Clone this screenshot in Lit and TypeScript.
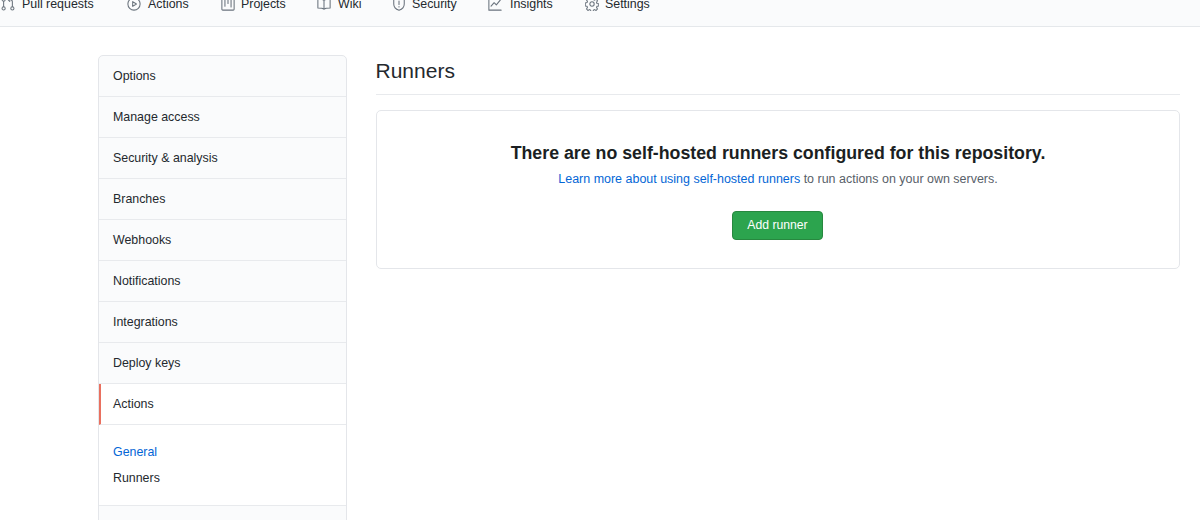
import { LitElement, html, css, svg } from "lit";
import { customElement } from "lit/decorators.js";

const icon = (w: number, body: unknown) => html`<svg class="ico" width="${w}" height="${w}" viewBox="0 0 16 16" fill="none" stroke="#6a737d" stroke-width="1.2" stroke-linecap="round" stroke-linejoin="round">${body}</svg>`;

// label, icon, gap between icon and label, width of the tab
const tabs: [string, unknown, number, number][] = [
  ["Pull requests", svg`<circle cx="3" cy="3" r="1.8"/><circle cx="3" cy="13" r="1.8"/><circle cx="13" cy="13" r="1.8"/><path d="M3 5v6M13 11V5.5C13 4 12 3 10.5 3H8.5M10 1L8 3l2 2"/>`, 7, 126],
  ["Actions", svg`<circle cx="8" cy="8" r="7"/><path d="M6.5 5.3v5.4L10.8 8z"/>`, 7, 94],
  ["Projects", svg`<rect x="1" y="1" width="14" height="14" rx="1"/><path d="M4.5 3.5v7M8 3.5v4M11.5 3.5v8"/>`, 6, 96],
  ["Wiki", svg`<path d="M8 4v10M8 4C7 2.8 5.5 2.5 1 2.5v10c4.5 0 6 .4 7 1.5 1-1.1 2.5-1.5 7-1.5v-10c-4.5 0-6 .3-7 1.5z"/>`, 7, 75],
  ["Security", svg`<path d="M8 .8L2 3v5c0 3.5 2.4 6 6 7.2 3.6-1.2 6-3.7 6-7.200V3z"/><path d="M8 4.500v4M8 11v.5"/>`, 6, 96],
  ["Insights", svg`<path d="M1 1v14h14"/><path d="M3.500 10.500L7 6.500l2.500 2.500L14 3.500"/>`, 8, 97],
  ["Settings", svg`<circle cx="8" cy="8" r="2.500"/><path d="M6.800 1h2.400l.4 2 1.300.6 1.800-1 1.600 1.700-1.100 1.700.5 1.400 2 .4v2.400l-2 .4-.5 1.400 1.100 1.700-1.600 1.700-1.800-1-1.300.6-.4 2H6.800l-.4-2-1.300-.6-1.800 1-1.600-1.700 1.100-1.700-.5-1.400-2-.4V6.800l2-.4.5-1.400-1.100-1.700 1.600-1.700 1.800 1 1.300-.6z"/>`, 6, 80],
];

const items = ["Options", "Manage access", "Security & analysis", "Branches", "Webhooks", "Notifications", "Integrations", "Deploy keys"];

@customElement("app-root")
export class AppRoot extends LitElement {
  static styles = css`
    :host {
      display: block;
      width: 1200px;
      height: 520px;
      overflow: hidden;
      background: #fff;
      font-family: "Liberation Sans", Arial, sans-serif;
      font-size: 12.4px;
      color: #24292e;
    }
    .nav {
      height: 26px;
      background: #fafbfc;
      border-bottom: 1px solid #e5e8eb;
      display: flex;
      align-items: flex-start;
      padding-left: 1px;
      overflow: hidden;
    }
    .tab {
      flex: none;
      display: flex;
      align-items: center;
      height: 18px;
      margin-top: -5px;
      line-height: 18px;
      color: #24292e;
      white-space: nowrap;
    }
    .ico { flex: none; }
    .body {
      display: flex;
      align-items: flex-start;
      padding: 28px 20px 0 98px;
      gap: 29px;
    }
    .side {
      flex: none;
      width: 249px;
      box-sizing: border-box;
      border: 1px solid #e4e6ea;
      border-radius: 5px;
      background: #fafbfc;
      overflow: hidden;
    }
    .item {
      height: 40px;
      line-height: 40px;
      padding-left: 14px;
      border-bottom: 1px solid #e8eaed;
      white-space: nowrap;
    }
    .item.current {
      background: #fff;
      padding-left: 12px;
      border-left: 2px solid #e9705f;
    }
    .sub {
      background: #fff;
      padding: 18px 0 12px 14px;
      height: 50px;
      border-bottom: 1px solid #e8eaed;
      display: flex;
      flex-direction: column;
      gap: 8px;
    }
    .sub a { display: block; line-height: 18px; }
    .link { color: #0366d6; }
    .tail { height: 40px; }
    .main { flex: 1; min-width: 0; }
    h2 {
      margin: 0;
      height: 39px;
      line-height: 31px;
      font-size: 21px;
      font-weight: 400;
      text-indent: -0.5px;
      color: #24292e;
      border-bottom: 1px solid #e8eaed;
    }
    .box {
      margin-top: 15px;
      height: 157px;
      border: 1px solid #e4e6ea;
      border-radius: 5px;
      display: flex;
      flex-direction: column;
      align-items: center;
    }
    h3 {
      margin: 30px 0 0;
      font-size: 17.770px;
      line-height: 24px;
      font-weight: 700;
      color: #1b1f23;
    }
    p {
      margin: 5px 0 0;
      font-size: 12.480px;
      line-height: 18px;
      color: #586069;
    }
    .btn {
      margin: 23px 1px 0 0;
      width: 91px;
      height: 29px;
      box-sizing: border-box;
      border: 1px solid #27883f;
      border-radius: 4px;
      background: #2ca44e;
      color: #fff;
      font: 12.200px/27px "Liberation Sans", Arial, sans-serif;
      text-align: center;
      padding: 0;
    }
  `;

  render() {
    return html`
      <div class="nav">
        ${tabs.map(([t, body, g, w]) => html`<div class="tab" style="width:${w}px">${icon(14, body)}<span style="margin-left:${g}px">${t}</span></div>`)}
      </div>
      <div class="body">
        <div class="side">
          ${items.map((i) => html`<div class="item">${i}</div>`)}
          <div class="item current">Actions</div>
          <div class="sub">
            <a class="link">General</a>
            <a>Runners</a>
          </div>
          <div class="tail"></div>
        </div>
        <div class="main">
          <h2>Runners</h2>
          <div class="box">
            <h3>There are no self-hosted runners configured for this repository.</h3>
            <p><a class="link">Learn more about using self-hosted runners</a> to run actions on your own servers.</p>
            <button class="btn">Add runner</button>
          </div>
        </div>
      </div>
    `;
  }
}
